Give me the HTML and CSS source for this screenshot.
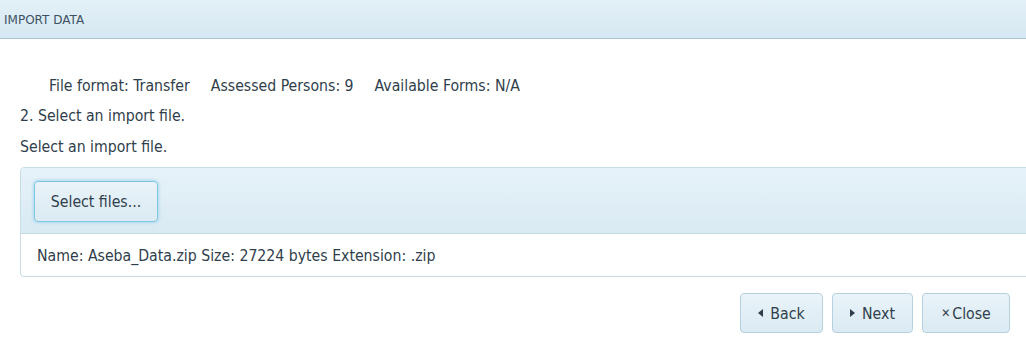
FILE: index.html
```html
<!DOCTYPE html>
<html>
<head>
<meta charset="utf-8">
<link rel="stylesheet" href="styles.css">
</head>
<body>
<div class="header"><span class="title">IMPORT DATA</span></div>
<div class="content">
  <div class="info">
    <span>File format: Transfer</span>
    <span>Assessed Persons: 9</span>
    <span>Available Forms: N/A</span>
  </div>
  <div class="line">2. Select an import file.</div>
  <div class="line">Select an import file.</div>
  <div class="upload">
    <div class="toolbar">
      <button class="btn select">Select files...</button>
    </div>
    <div class="filerow">Name: Aseba_Data.zip Size: 27224 bytes Extension: .zip</div>
  </div>
  <div class="actions">
    <button class="btn nav back"><span class="tri left"></span>Back</button>
    <button class="btn nav next"><span class="tri right"></span>Next</button>
    <button class="btn nav close"><span class="x">&#x2715;</span>Close</button>
  </div>
</div>
</body>
</html>
```
FILE: styles.css
```css
html, body {
  margin: 0;
  padding: 0;
  background: #ffffff;
  overflow: hidden;
}
body {
  width: 1026px;
  height: 348px;
  font-family: "DejaVu Sans Condensed", "DejaVu Sans", sans-serif;
  font-size: 15.7px;
  color: #2f3e4b;
}
.header {
  height: 38px;
  border-bottom: 1px solid #aac5d6;
  background: linear-gradient(#e3f0f7, #d6e8f2);
  display: flex;
  align-items: center;
  padding-left: 4px;
}
.title {
  font-family: "DejaVu Sans", sans-serif;
  font-size: 12px;
  color: #3c5263;
  padding-top: 2px;
}
.content {
  padding: 32px 0 0 20px;
}
.info {
  display: flex;
  gap: 21px;
  padding-left: 29px;
  line-height: 30px;
}
.line {
  line-height: 30px;
}
.line + .line {
  line-height: 31px;
}
.upload {
  margin-top: 5px;
  width: 1020px;
  border: 1px solid #c6dde7;
  border-radius: 4px;
}
.toolbar {
  padding: 13px 13px 11px;
  background: linear-gradient(#e6f2f9, #d9eaf3);
  border-bottom: 1px solid #c6dde7;
  border-radius: 4px 4px 0 0;
  display: flex;
}
.btn {
  font-family: inherit;
  font-size: 15.7px;
  color: #2f3e4b;
  background: linear-gradient(#e9f3f9, #dbeaf3);
  border: 1px solid #b6d0de;
  border-radius: 4px;
  padding: 0;
  display: inline-flex;
  align-items: center;
  justify-content: center;
}
.select {
  width: 124px;
  height: 41px;
  border-color: #80c6e2;
  box-shadow: 0 0 3px 1px #a9daef;
}
.filerow {
  height: 42px;
  display: flex;
  align-items: center;
  padding-left: 16px;
}
.actions {
  display: flex;
  justify-content: flex-end;
  gap: 9px;
  margin-top: 16px;
  padding-right: 16px;
}
.nav {
  height: 40px;
}
.back { width: 83px; }
.next { width: 81px; }
.close { width: 88px; }
.tri {
  width: 0;
  height: 0;
  border-top: 4px solid transparent;
  border-bottom: 4px solid transparent;
  margin-right: 7px;
}
.tri.left { border-right: 5px solid #2f3e4b; }
.tri.right { border-left: 5px solid #2f3e4b; }
.x {
  font-size: 12px;
  font-weight: bold;
  margin-right: 2px;
}
```
